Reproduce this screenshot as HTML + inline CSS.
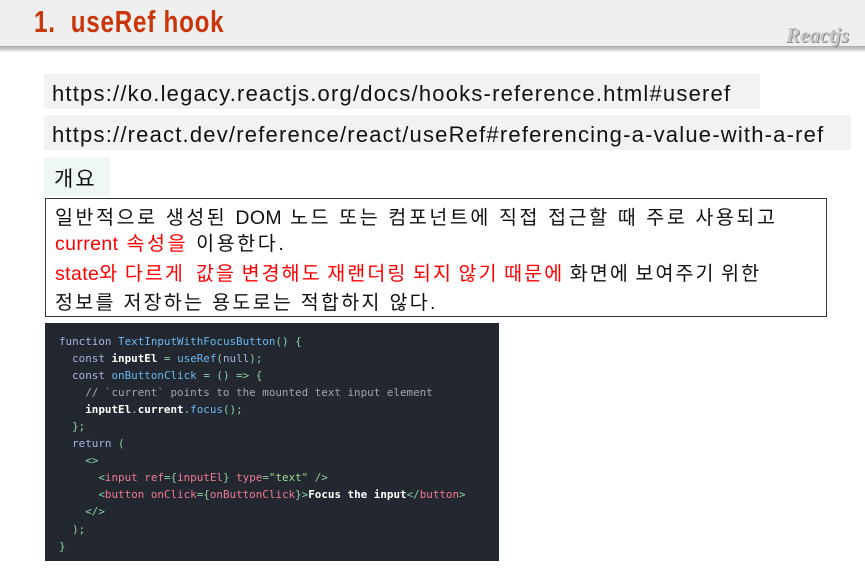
<!DOCTYPE html>
<html><head><meta charset="utf-8"><style>
*{margin:0;padding:0;box-sizing:border-box}
body{width:865px;height:574px;background:#fff;position:relative;overflow:hidden;font-family:"Liberation Sans","Noto Sans CJK KR",sans-serif}
.hdr{position:absolute;left:0;top:0;width:865px;height:48px;background:#efefef}
.sh{position:absolute;left:0;top:46px;width:865px;height:6px;background:linear-gradient(#a8a8a8,#e0e0e0 80%,#fff)}
.title{position:absolute;left:34px;top:4px;font-size:31px;font-weight:bold;color:#c9360c;transform:scaleX(0.78);transform-origin:left;letter-spacing:1px;white-space:nowrap}
.rj{position:absolute;left:786px;top:23px;font-family:"Liberation Serif",serif;font-style:italic;font-weight:bold;font-size:21px;color:#c8c8c8;text-shadow:1px 1px 0 #888}
.url{position:absolute;left:44px;background:#f2f2f2;font-size:22px;color:#111;padding-left:8px;line-height:40px;height:35px;letter-spacing:1.2px;white-space:nowrap;overflow:hidden}
.gy{position:absolute;left:44px;top:158px;width:66px;height:38px;background:#eef7f2;font-size:21px;line-height:44px;padding-left:10px;color:#111;letter-spacing:2px}
.box{position:absolute;left:45px;top:198px;width:782px;height:119px;border:1px solid #333;padding:7px 0 0 9px;font-size:19.5px;color:#111;letter-spacing:2.6px;white-space:nowrap}
.box div{height:26px;line-height:24px}
.l{letter-spacing:0.4px}
.r{color:#f00}
.code{position:absolute;left:45px;top:323px;width:454px;height:238px;background:#23272f;font-family:"DejaVu Sans Mono","Liberation Mono",monospace;font-size:10.9px;color:#eee;padding:10px 0 0 14px;white-space:pre;line-height:17.05px}
.k{color:#a7b4e2}.f{color:#6bb8f0}.c{color:#a0a6b0}.g{color:#8bd0a8}.t{color:#f07a95}.s{color:#9edb8e}.b{font-weight:bold;color:#fff}
</style></head><body>
<div class="hdr"></div><div class="sh"></div>
<div class="title">1.&nbsp; useRef hook</div>
<div class="rj">Reactjs</div>
<div class="url" style="top:74px;width:716px">https://ko.legacy.reactjs.org/docs/hooks-reference.html#useref</div>
<div class="url" style="top:115px;width:807px">https://react.dev/reference/react/useRef#referencing-a-value-with-a-ref</div>
<div class="gy">개요</div>
<div class="box">
<div>일반적으로 생성된 <span class="l">DOM</span> 노드 또는 컴포넌트에 직접 접근할 때 주로 사용되고</div>
<div style="height:30px"><span class="r"><span class="l">current</span> 속성을</span> 이용한다.</div>
<div style="height:29px;letter-spacing:2.1px;word-spacing:-2px"><span class="r"><span class="l">state</span>와 다르게&nbsp; 값을 변경해도 재랜더링 되지 않기 때문에</span> 화면에 보여주기 위한</div>
<div style="letter-spacing:2.3px">정보를 저장하는 용도로는 적합하지 않다.</div>
</div>
<div class="code"><span class="k">function</span> <span class="f">TextInputWithFocusButton</span><span class="g">() {</span>
  <span class="k">const</span> <span class="b">inputEl</span> <span class="g">=</span> <span class="f">useRef</span><span class="g">(</span><span class="k">null</span><span class="g">);</span>
  <span class="k">const</span> <span class="f">onButtonClick</span> <span class="g">= () =&gt; {</span>
    <span class="c">// `current` points to the mounted text input element</span>
    <span class="b">inputEl</span><span class="g">.</span><span class="b">current</span><span class="g">.</span><span class="f">focus</span><span class="g">();</span>
  <span class="g">};</span>
  <span class="k">return</span> <span class="g">(</span>
    <span class="g">&lt;&gt;</span>
      <span class="g">&lt;</span><span class="t">input</span> <span class="t">ref</span><span class="g">={</span><span class="t">inputEl</span><span class="g">}</span> <span class="t">type</span><span class="g">=</span><span class="s">"text"</span> <span class="g">/&gt;</span>
      <span class="g">&lt;</span><span class="t">button</span> <span class="t">onClick</span><span class="g">={</span><span class="t">onButtonClick</span><span class="g">}&gt;</span><span class="b">Focus the input</span><span class="g">&lt;/</span><span class="t">button</span><span class="g">&gt;</span>
    <span class="g">&lt;/&gt;</span>
  <span class="g">);</span>
<span class="g">}</span></div>
</body></html>
